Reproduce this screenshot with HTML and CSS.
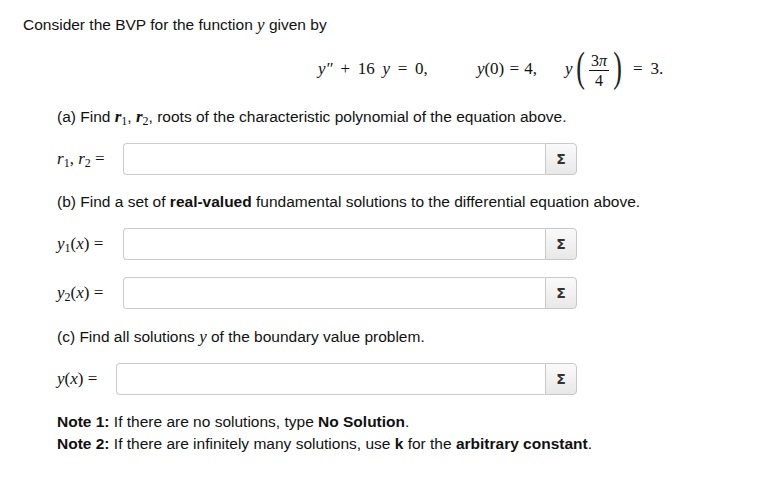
FILE: index.html
```html
<!DOCTYPE html>
<html>
<head>
<meta charset="utf-8">
<link rel="stylesheet" href="styles.css">
</head>
<body>
<div class="page">
  <p class="intro">Consider the BVP for the function <span class="m">y</span> given by</p>
  <div class="eq"><span class="m">y″</span> + 16 <span class="m">y</span> = 0,<span class="gap"></span><span class="tight"><span class="m">y</span>(0) = 4,</span><span class="gap2"></span><span class="m">y</span><span class="paren">(</span><span class="frac"><span class="num">3<span class="m">π</span></span><span class="den">4</span></span><span class="paren">)</span> = 3.</div>
  <div class="part">
    <p class="q qa">(a) Find <span class="m b">r</span><sub>1</sub>, <span class="m b">r</span><sub>2</sub>, roots of the characteristic polynomial of the equation above.</p>
    <div class="row">
      <span class="label"><span class="m">r</span><sub>1</sub>, <span class="m">r</span><sub>2</sub> =</span>
      <div class="field"><div class="input"></div><div class="btn">Σ</div></div>
    </div>
    <p class="q">(b) Find a set of <b>real-valued</b> fundamental solutions to the differential equation above.</p>
    <div class="row">
      <span class="label"><span class="m">y</span><sub>1</sub>(<span class="m">x</span>) =</span>
      <div class="field"><div class="input"></div><div class="btn">Σ</div></div>
    </div>
    <div class="row">
      <span class="label"><span class="m">y</span><sub>2</sub>(<span class="m">x</span>) =</span>
      <div class="field"><div class="input"></div><div class="btn">Σ</div></div>
    </div>
    <p class="q qc">(c) Find all solutions <span class="m">y</span> of the boundary value problem.</p>
    <div class="row">
      <span class="label short"><span class="m">y</span>(<span class="m">x</span>) =</span>
      <div class="field"><div class="input wide"></div><div class="btn">Σ</div></div>
    </div>
    <div class="notes">
      <p><b>Note 1:</b> If there are no solutions, type <b>No Solution</b>.</p>
      <p><b>Note 2:</b> If there are infinitely many solutions, use <b>k</b> for the <b>arbitrary constant</b>.</p>
    </div>
  </div>
</div>
</body>
</html>
```
FILE: styles.css
```css
html, body {
  margin: 0;
  padding: 0;
  background: #fff;
}
body {
  font-family: "Liberation Sans", Arial, sans-serif;
  font-size: 15.5px;
  color: #111;
}
p { margin: 0; }
.page {
  padding: 16px 0 0 23px;
}
.intro {
  line-height: 18px;
}
.m {
  font-family: "Liberation Serif", "Times New Roman", serif;
  font-style: italic;
  font-size: 17px;
}
.m.b { font-weight: bold; }
.eq {
  font-family: "Liberation Serif", "Times New Roman", serif;
  font-size: 17px;
  white-space: pre;
  word-spacing: 3.5px;
  margin: 14px 0 0 295px;
  height: 42px;
  line-height: 42px;
}
.tight { word-spacing: 1px; }
.gap { display: inline-block; width: 49px; }
.gap2 { display: inline-block; width: 28px; }
.paren {
  display: inline-block;
  font-size: 40px;
  line-height: 40px;
  font-weight: normal;
  vertical-align: middle;
  transform: scale(0.65, 1.05);
  margin: -6px 1px 0;
  color: #222;
}
.frac {
  display: inline-flex;
  flex-direction: column;
  align-items: center;
  vertical-align: middle;
  font-size: 16px;
  line-height: 17px;
  margin: 0 1px;
}
.frac .m { font-size: 16px; }
.num {
  border-bottom: 1px solid #111;
  padding: 0 2px 1px;
}
.den { padding-top: 1px; }
.part {
  padding-left: 34px;
}
.q {
  margin-top: 18px;
  line-height: 18px;
}
.q.qa { margin-top: 18px; }
.q.qc { margin-top: 19px; }
sub {
  font-size: 12px;
  font-family: "Liberation Serif", serif;
  vertical-align: -3px;
  line-height: 0;
}
.row {
  display: flex;
  align-items: center;
  margin-top: 17px;
  height: 32px;
}
.label {
  font-family: "Liberation Serif", serif;
  font-size: 17px;
  width: 66px;
  white-space: nowrap;
}
.label.short { width: 59px; }
.field {
  display: flex;
  height: 32px;
}
.input {
  width: 421px;
  height: 30px;
  border: 1px solid #cccccc;
  border-right: none;
  border-radius: 4px 0 0 4px;
  background: #fff;
}
.input.wide { width: 428px; }
.btn {
  width: 30px;
  height: 30px;
  border: 1px solid #c8c8c8;
  border-radius: 0 4px 4px 0;
  background: linear-gradient(#fafafa, #e8e8e8);
  display: flex;
  align-items: center;
  justify-content: center;
  font-family: "DejaVu Sans", sans-serif;
  font-weight: bold;
  font-size: 14px;
  color: #333;
}
.notes {
  margin-top: 16px;
  line-height: 22px;
}
```
